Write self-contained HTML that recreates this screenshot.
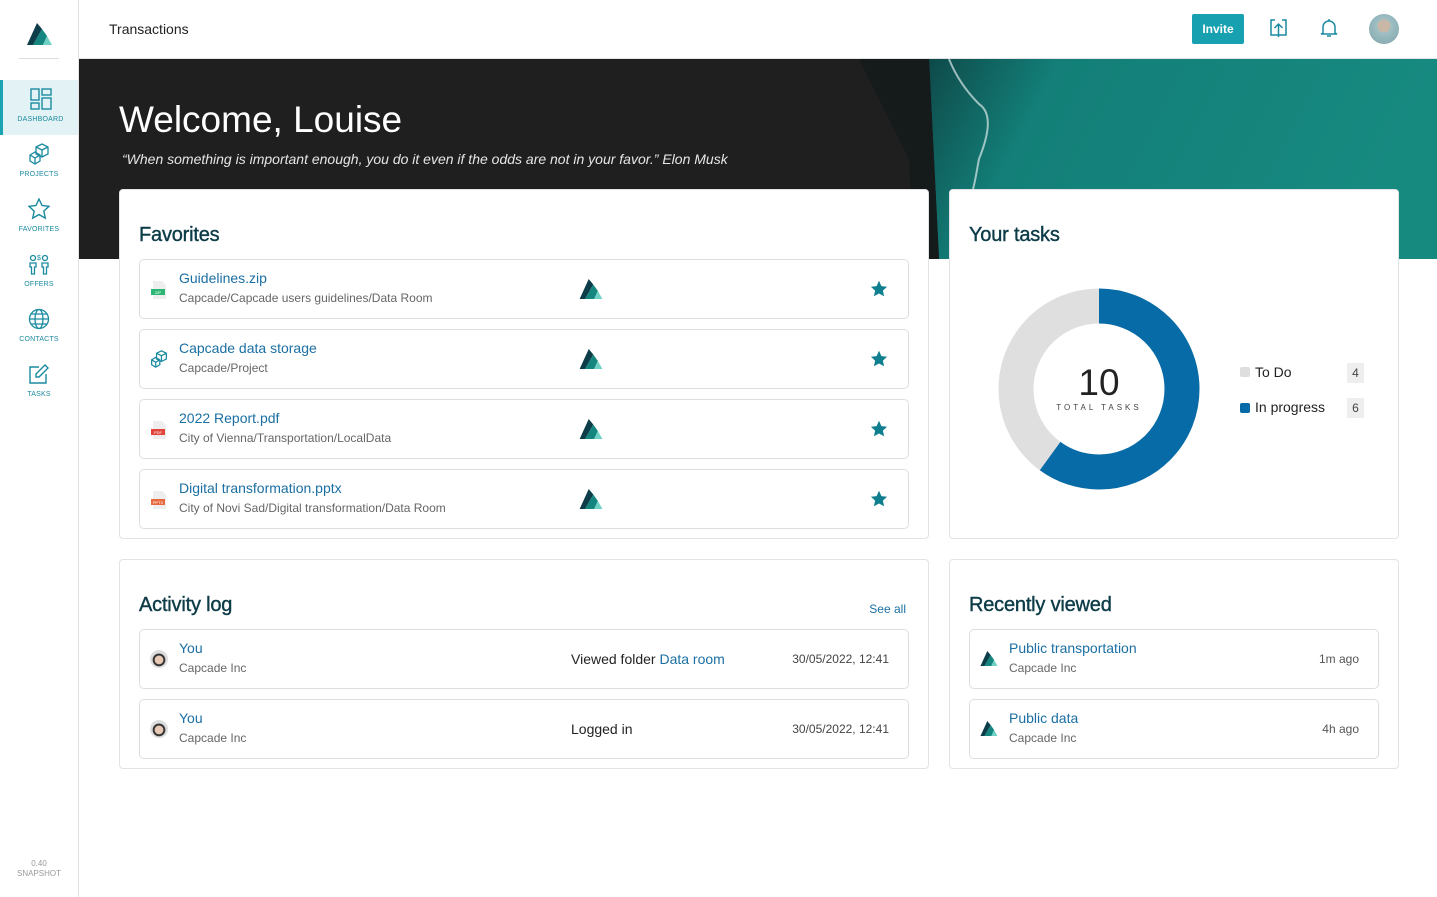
<!DOCTYPE html>
<html><head><meta charset="utf-8"><style>
*{box-sizing:border-box;margin:0;padding:0}
body{width:1437px;height:897px;background:#fff;font-family:"Liberation Sans",sans-serif;position:relative;overflow:hidden;color:#222}
.side{position:absolute;left:0;top:0;width:79px;height:897px;border-right:1px solid #e3e3e3;background:#fff}
.nav{position:absolute;left:0;width:78px;height:55px;text-align:center;color:#1a8aa0;font-size:7px;letter-spacing:.2px}
.nav svg{display:block;margin:8px auto 6px}
.nav.act{background:#e3f3f5;border-left:3px solid #1aa3b0}
.top{position:absolute;left:79px;top:0;right:0;height:59px;border-bottom:1px solid #e3e3e3;background:#fff}
.hero{position:absolute;left:79px;top:59px;width:1358px;height:200px;overflow:hidden;background:#1d1d1d}
.card{position:absolute;background:#fff;border:1px solid #e3e3e3;border-radius:4px}
.card h2{position:absolute;left:19px;font-size:20px;font-weight:normal;color:#0d3c48;letter-spacing:-.2px;-webkit-text-stroke:.4px #0d3c48}
.row{position:absolute;left:19px;right:19px;height:60px;border:1px solid #dedede;border-radius:5px;background:#fff}
.t1{position:absolute;left:39px;top:10px;font-size:14px;color:#1b6fa3}
.t2{position:absolute;left:39px;top:31px;font-size:12px;color:#666}
.ic{position:absolute;left:10px;top:20px}
</style></head><body>
<div class="side">
 <svg style="position:absolute;left:27px;top:23px" width="25" height="22" viewBox="0 0 25 22"><polygon points="10,0 15,6 6,22 0,22" fill="#0e3d4a"/><polygon points="15,6 20,13 16,22 6,22" fill="#15867f"/><polygon points="20,13 25,22 16,22" fill="#6fd1c6"/></svg>
 <div style="position:absolute;left:19px;top:58px;width:40px;height:1px;background:#ddd"></div>
 <div class="nav act" style="top:80px"><svg width="22" height="22" viewBox="0 0 22 22" fill="none" stroke="#1a8aa0" stroke-width="1.4"><rect x="1" y="1" width="8" height="11"/><rect x="1" y="15" width="8" height="6"/><rect x="12" y="1" width="9" height="6"/><rect x="12" y="10" width="9" height="11"/></svg>DASHBOARD</div>
 <div class="nav" style="top:135px"><svg width="22" height="22" viewBox="0 0 22 22" fill="none" stroke="#1a8aa0" stroke-width="1.3"><path d="M8 4l6-3 6 3v7l-6 3-6-3z M8 4l6 3 6-3 M14 7v7"/><path d="M2 12l5-3 5 3v6l-5 3-5-3z M2 12l5 3 5-3 M7 15v6"/></svg>PROJECTS</div>
 <div class="nav" style="top:190px"><svg width="22" height="22" viewBox="0 0 22 22" fill="none" stroke="#1a8aa0" stroke-width="1.4"><path d="M11 1l3 6.5 7 .8-5.2 4.8 1.5 7L11 16.6 4.7 20.1l1.5-7L1 8.3l7-.8z"/></svg>FAVORITES</div>
 <div class="nav" style="top:245px"><svg width="22" height="22" viewBox="0 0 22 22" fill="none" stroke="#1a8aa0" stroke-width="1.3"><circle cx="5" cy="5" r="2.5"/><circle cx="17" cy="5" r="2.5"/><path d="M2 14v-4h6v4h-1.5v7h-3v-7z M14 14v-4h6v4h-1.5v7h-3v-7z"/><text x="11" y="7" font-size="7" fill="#1a8aa0" stroke="none" text-anchor="middle">$</text></svg>OFFERS</div>
 <div class="nav" style="top:300px"><svg width="22" height="22" viewBox="0 0 22 22" fill="none" stroke="#1a8aa0" stroke-width="1.3"><circle cx="11" cy="11" r="9.5"/><ellipse cx="11" cy="11" rx="4" ry="9.5"/><path d="M1.5 11h19 M3 6h16 M3 16h16"/></svg>CONTACTS</div>
 <div class="nav" style="top:355px"><svg width="22" height="22" viewBox="0 0 22 22" fill="none" stroke="#1a8aa0" stroke-width="1.4"><path d="M11 4H2v16h16v-9"/><path d="M17 2l3 3-9 9H8v-3z"/></svg>TASKS</div>
 <div style="position:absolute;left:0;width:78px;top:859px;text-align:center;font-size:8px;color:#999;line-height:10px">0.40<br>SNAPSHOT</div>
</div>
<div class="top">
 <div style="position:absolute;left:30px;top:21px;font-size:14px;color:#222">Transactions</div>
 <div style="position:absolute;left:1113px;top:14px;width:52px;height:30px;background:#16a0b0;border-radius:2px;color:#fff;font-size:12px;font-weight:bold;text-align:center;line-height:30px">Invite</div>
 <svg style="position:absolute;left:1190px;top:18px" width="19" height="20" viewBox="0 0 19 20" fill="none" stroke="#1a8aa0" stroke-width="1.5"><path d="M6 2H2v15h15V2h-4"/><path d="M9.5 19V6 M5.5 10l4-4 4 4"/></svg>
 <svg style="position:absolute;left:1241px;top:18px" width="18" height="20" viewBox="0 0 18 20" fill="none" stroke="#1a8aa0" stroke-width="1.5"><path d="M3 15V9a6 6 0 0112 0v6l2 1H1z M9 1v2 M7 18h4"/></svg>
 <div style="position:absolute;left:1290px;top:14px;width:30px;height:30px;border-radius:50%;background:radial-gradient(circle at 50% 40%,#c8b7a6 0 25%,#9fbfc3 30%,#7ea5ab)"></div>
</div>
<div class="hero">
 <svg width="1358" height="200" style="position:absolute;left:0;top:0"><defs><linearGradient id="w" x1="0" y1="0" x2="1" y2="0.2"><stop offset="0" stop-color="#0e4a4a"/><stop offset=".25" stop-color="#137f78"/><stop offset="1" stop-color="#178a80"/></linearGradient></defs>
 <rect width="1358" height="200" fill="#1f1f1f"/>
 <polygon points="850,0 1358,0 1358,200 860,200" fill="url(#w)"/>
 <polygon points="780,0 850,0 860,200 835,200 830,100" fill="#151a1b"/>
 <path d="M870 0 C880 20 890 40 905 55 C915 70 912 90 905 110 C900 130 900 150 890 175" stroke="#cfe3e3" stroke-width="2" fill="none" opacity=".0"/>
 <path d="M870 0 C878 20 890 35 900 45 C915 55 908 80 900 100 C896 120 895 140 880 160" stroke="#d8e8e8" stroke-width="2" fill="none" opacity=".7"/>
 </svg>
 <div style="position:absolute;left:40px;top:40px;font-size:37px;color:#fff">Welcome, Louise</div>
 <div style="position:absolute;left:43px;top:92px;font-size:14px;color:#e6e6e6;font-style:italic">“When something is important enough, you do it even if the odds are not in your favor.” Elon Musk</div>
</div>

<div class="card" style="left:119px;top:189px;width:810px;height:350px">
 <h2 style="top:34px">Favorites</h2>
 <div class="row" style="top:69px"><svg class="ic" width="18" height="20" viewBox="0 0 18 20"><path d="M3 1h9l4 4v14H3z" fill="#eee"/><rect x="1" y="9" width="14" height="6" fill="#2bb673"/><text x="8" y="14" font-size="4" fill="#fff" text-anchor="middle">ZIP</text></svg><div class="t1">Guidelines.zip</div><div class="t2">Capcade/Capcade users guidelines/Data Room</div></div>
 <div class="row" style="top:139px"><svg class="ic" width="18" height="18" viewBox="0 0 22 22" fill="none" stroke="#1a8aa0" stroke-width="1.5"><path d="M8 4l6-3 6 3v7l-6 3-6-3z M8 4l6 3 6-3 M14 7v7"/><path d="M2 12l5-3 5 3v6l-5 3-5-3z M2 12l5 3 5-3 M7 15v6"/></svg><div class="t1">Capcade data storage</div><div class="t2">Capcade/Project</div></div>
 <div class="row" style="top:209px"><svg class="ic" width="18" height="20" viewBox="0 0 18 20"><path d="M3 1h9l4 4v14H3z" fill="#eee"/><rect x="1" y="9" width="14" height="6" fill="#e2453c"/><text x="8" y="14" font-size="4" fill="#fff" text-anchor="middle">PDF</text></svg><div class="t1">2022 Report.pdf</div><div class="t2">City of Vienna/Transportation/LocalData</div></div>
 <div class="row" style="top:279px"><svg class="ic" width="18" height="20" viewBox="0 0 18 20"><path d="M3 1h9l4 4v14H3z" fill="#eee"/><rect x="1" y="9" width="14" height="6" fill="#e8683e"/><text x="8" y="14" font-size="4" fill="#fff" text-anchor="middle">PPTX</text></svg><div class="t1">Digital transformation.pptx</div><div class="t2">City of Novi Sad/Digital transformation/Data Room</div></div>
</div>
<div class="card" style="left:949px;top:189px;width:450px;height:350px">
 <h2 style="top:34px">Your tasks</h2>
 <svg style="position:absolute;left:48px;top:98px" width="202" height="202" viewBox="0 0 202 202"><circle cx="101" cy="101" r="83" fill="none" stroke="#dfdfdf" stroke-width="35"/><circle cx="101" cy="101" r="83" fill="none" stroke="#066ba6" stroke-width="35" stroke-dasharray="312.9 600" transform="rotate(-90 101 101)"/></svg>
 <div style="position:absolute;left:99px;top:172px;width:100px;text-align:center;font-size:37px;color:#222">10</div>
 <div style="position:absolute;left:99px;top:213px;width:100px;text-align:center;font-size:8px;letter-spacing:3px;color:#444">TOTAL TASKS</div>
 <div style="position:absolute;left:290px;top:177px;width:10px;height:10px;border-radius:2px;background:#dedede"></div>
 <div style="position:absolute;left:305px;top:174px;font-size:14px">To Do</div>
 <div style="position:absolute;left:397px;top:173px;width:17px;height:20px;background:#eee;font-size:12px;text-align:center;line-height:20px;color:#444">4</div>
 <div style="position:absolute;left:290px;top:213px;width:10px;height:10px;border-radius:2px;background:#066ba6"></div>
 <div style="position:absolute;left:305px;top:209px;font-size:14px">In progress</div>
 <div style="position:absolute;left:397px;top:208px;width:17px;height:20px;background:#eee;font-size:12px;text-align:center;line-height:20px;color:#444">6</div>
</div>

<div class="card" style="left:119px;top:559px;width:810px;height:210px">
 <h2 style="top:34px">Activity log</h2>
 <div style="position:absolute;right:22px;top:42px;font-size:12px;color:#1b6fa3">See all</div>
 <div class="row" style="top:69px"><div class="ic" style="top:20px;width:18px;height:18px;border-radius:50%;background:radial-gradient(circle at 50% 55%,#e8c9b5 0 30%,#333 35% 45%,#ddd 50%)"></div><div class="t1">You</div><div class="t2">Capcade Inc</div><div style="position:absolute;left:431px;top:21px;font-size:14px">Viewed folder <span style="color:#1b6fa3">Data room</span></div><div style="position:absolute;right:19px;top:22px;font-size:12px;color:#444">30/05/2022, 12:41</div></div>
 <div class="row" style="top:139px"><div class="ic" style="top:20px;width:18px;height:18px;border-radius:50%;background:radial-gradient(circle at 50% 55%,#e8c9b5 0 30%,#333 35% 45%,#ddd 50%)"></div><div class="t1">You</div><div class="t2">Capcade Inc</div><div style="position:absolute;left:431px;top:21px;font-size:14px">Logged in</div><div style="position:absolute;right:19px;top:22px;font-size:12px;color:#444">30/05/2022, 12:41</div></div>
</div>
<div class="card" style="left:949px;top:559px;width:450px;height:210px">
 <h2 style="top:34px">Recently viewed</h2>
 <div class="row" style="top:69px"><svg class="ic" style="top:21px" width="18" height="15" viewBox="0 0 25 22"><polygon points="10,0 15,6 6,22 0,22" fill="#0e3d4a"/><polygon points="15,6 20,13 16,22 6,22" fill="#15867f"/><polygon points="20,13 25,22 16,22" fill="#6fd1c6"/></svg><div class="t1">Public transportation</div><div class="t2">Capcade Inc</div><div style="position:absolute;right:19px;top:22px;font-size:12px;color:#555">1m ago</div></div>
 <div class="row" style="top:139px"><svg class="ic" style="top:21px" width="18" height="15" viewBox="0 0 25 22"><polygon points="10,0 15,6 6,22 0,22" fill="#0e3d4a"/><polygon points="15,6 20,13 16,22 6,22" fill="#15867f"/><polygon points="20,13 25,22 16,22" fill="#6fd1c6"/></svg><div class="t1">Public data</div><div class="t2">Capcade Inc</div><div style="position:absolute;right:19px;top:22px;font-size:12px;color:#555">4h ago</div></div>
</div>
<div style="position:absolute;left:119px;top:189px;width:810px;height:350px;pointer-events:none">
 <svg style="position:absolute;left:460px;top:90px" width="24" height="20" viewBox="0 0 25 22"><polygon points="10,0 15,6 6,22 0,22" fill="#0e3d4a"/><polygon points="15,6 20,13 16,22 6,22" fill="#15867f"/><polygon points="20,13 25,22 16,22" fill="#6fd1c6"/></svg>
 <svg style="position:absolute;left:460px;top:160px" width="24" height="20" viewBox="0 0 25 22"><polygon points="10,0 15,6 6,22 0,22" fill="#0e3d4a"/><polygon points="15,6 20,13 16,22 6,22" fill="#15867f"/><polygon points="20,13 25,22 16,22" fill="#6fd1c6"/></svg>
 <svg style="position:absolute;left:460px;top:230px" width="24" height="20" viewBox="0 0 25 22"><polygon points="10,0 15,6 6,22 0,22" fill="#0e3d4a"/><polygon points="15,6 20,13 16,22 6,22" fill="#15867f"/><polygon points="20,13 25,22 16,22" fill="#6fd1c6"/></svg>
 <svg style="position:absolute;left:460px;top:300px" width="24" height="20" viewBox="0 0 25 22"><polygon points="10,0 15,6 6,22 0,22" fill="#0e3d4a"/><polygon points="15,6 20,13 16,22 6,22" fill="#15867f"/><polygon points="20,13 25,22 16,22" fill="#6fd1c6"/></svg>
 <svg style="position:absolute;left:751px;top:91px" width="18" height="17" viewBox="0 0 22 21"><path d="M11 1l3 6.5 7 .8-5.2 4.8 1.5 7L11 16.6 4.7 20.1l1.5-7L1 8.3l7-.8z" fill="#0f7e8e"/></svg>
 <svg style="position:absolute;left:751px;top:161px" width="18" height="17" viewBox="0 0 22 21"><path d="M11 1l3 6.5 7 .8-5.2 4.8 1.5 7L11 16.6 4.7 20.1l1.5-7L1 8.3l7-.8z" fill="#0f7e8e"/></svg>
 <svg style="position:absolute;left:751px;top:231px" width="18" height="17" viewBox="0 0 22 21"><path d="M11 1l3 6.5 7 .8-5.2 4.8 1.5 7L11 16.6 4.7 20.1l1.5-7L1 8.3l7-.8z" fill="#0f7e8e"/></svg>
 <svg style="position:absolute;left:751px;top:301px" width="18" height="17" viewBox="0 0 22 21"><path d="M11 1l3 6.5 7 .8-5.2 4.8 1.5 7L11 16.6 4.7 20.1l1.5-7L1 8.3l7-.8z" fill="#0f7e8e"/></svg>
</div>
</body></html>
